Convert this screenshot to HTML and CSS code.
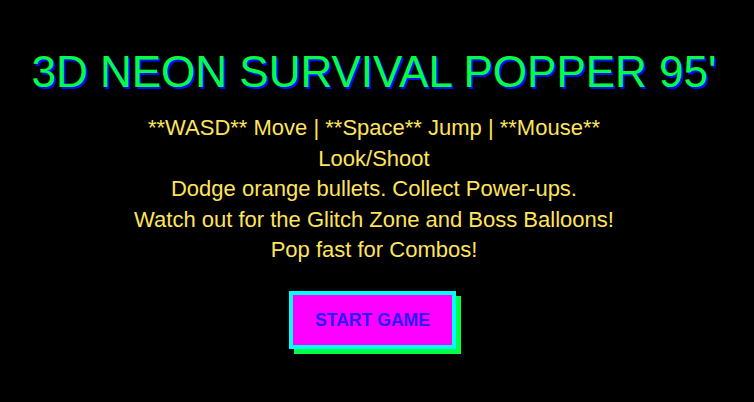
FILE: index.html
```html
<!DOCTYPE html>
<html lang="en">
<head>
<meta charset="utf-8">
<title>3D Neon Survival Popper 95'</title>
<link rel="stylesheet" href="styles.css">
</head>
<body>
<main class="menu">
  <h1 class="title">3D NEON SURVIVAL POPPER 95'</h1>
  <p class="instructions">**WASD** Move | **Space** Jump | **Mouse** Look/Shoot<br>Dodge orange bullets. Collect Power-ups.<br>Watch out for the Glitch Zone and Boss Balloons!<br>Pop fast for Combos!</p>
  <button class="start-btn" type="button">START GAME</button>
</main>
</body>
</html>
```

FILE: styles.css
```css
html, body {
  margin: 0;
  padding: 0;
  background: #000;
  height: 100%;
}

body {
  font-family: "Liberation Sans", Arial, sans-serif;
  overflow: hidden;
}

.menu {
  display: flex;
  flex-direction: column;
  align-items: center;
  padding: 47px 6px 0 0;
  text-align: center;
}

.title {
  margin: 0;
  font-size: 44px;
  font-weight: normal;
  line-height: 50px;
  color: #00ff44;
  text-shadow: 2px 2px 0 #0a0aff;
  white-space: nowrap;
}

.instructions {
  margin: 16px 0 0;
  max-width: 520px;
  font-size: 22px;
  line-height: 30.5px;
  color: #ffe45c;
}

.start-btn {
  margin: 25px 3px 0 0;
  padding: 14px 22px;
  font-family: "Liberation Sans", Arial, sans-serif;
  font-size: 17.6px;
  font-weight: bold;
  line-height: 22px;
  color: #2a1aff;
  background: #ff00ff;
  border: 4px solid #00ffff;
  box-shadow: 5px 5px 0 #00ff44;
  cursor: pointer;
}
```
